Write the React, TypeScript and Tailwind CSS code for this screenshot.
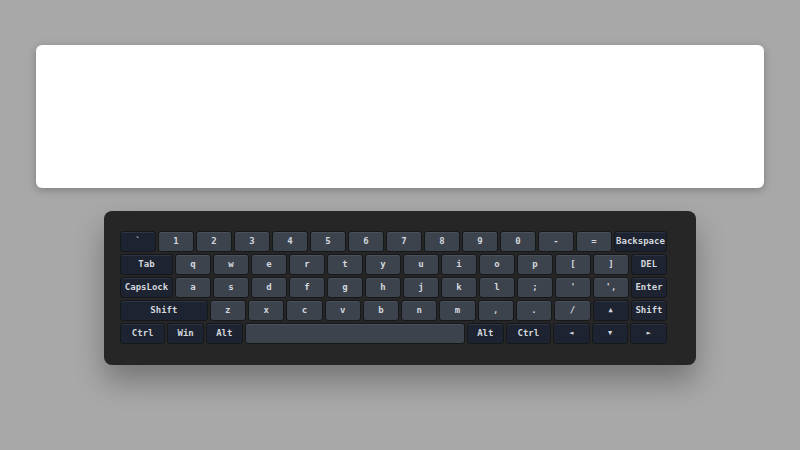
import React from "react";

type Key = { label: string; w?: number; dark?: boolean; small?: boolean };

const u = (label: string, w = 1): Key => ({ label, w });
const mod = (label: string, w = 1, small = false): Key => ({ label, w, dark: true, small });

const rows: Key[][] = [
  [mod("`"), ..."1234567890-=".split("").map((c) => u(c)), mod("Backspace", 1.5)],
  [mod("Tab", 1.5), ..."qwertyuiop[]".split("").map((c) => u(c)), mod("DEL")],
  [mod("CapsLock", 1.5), ...["a", "s", "d", "f", "g", "h", "j", "k", "l", ";", "'", "',"].map((c) => u(c)), mod("Enter")],
  [mod("Shift", 2.5), ..."zxcvbnm,./".split("").map((c) => u(c)), mod("▲", 1, true), mod("Shift")],
  [
    mod("Ctrl", 1.25),
    mod("Win"),
    mod("Alt"),
    u("", 6.3),
    mod("Alt"),
    mod("Ctrl", 1.25),
    mod("◄", 1, true),
    mod("▼", 1, true),
    mod("►", 1, true),
  ],
];

const KeyCap: React.FC<{ k: Key }> = ({ k }) => (
  <div
    style={{ flex: `${k.w ?? 1} 1 0%` }}
    className={
      "h-[21px] min-w-0 flex items-center justify-center rounded-[3px] border border-[#15171b] text-[#d3d7dd] font-semibold shadow-[inset_0_1px_0_rgba(255,255,255,0.08)] " +
      (k.dark ? "bg-[#1d2331]" : "bg-[#3c434d]") +
      (k.small ? " text-[7px]" : " text-[9px]")
    }
  >
    {k.label}
  </div>
);

export default function App() {
  return (
    <div className="w-[800px] h-[450px] bg-[#a8a8a8] flex flex-col items-center pt-[45px] gap-[23px] font-['DejaVu_Sans_Mono',monospace]">
      <div className="w-[728px] h-[143px] bg-white rounded-md shadow-[0_2px_8px_rgba(0,0,0,0.25)]" />
      <div className="w-[592px] h-[154px] bg-[#262626] rounded-lg shadow-[0_16px_30px_rgba(0,0,0,0.3)] pl-4 pt-5">
        <div className="w-[547px] flex flex-col gap-[2px]">
          {rows.map((row, i) => (
            <div key={i} className="flex gap-[2px]">
              {row.map((k, j) => (
                <KeyCap key={j} k={k} />
              ))}
            </div>
          ))}
        </div>
      </div>
    </div>
  );
}
